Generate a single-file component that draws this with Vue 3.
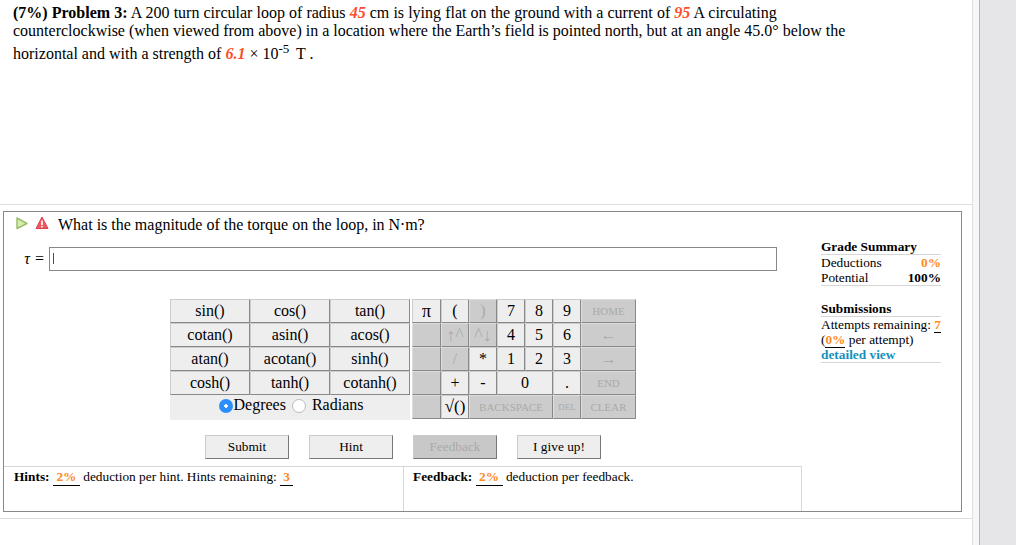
<script setup>
const fns = ['sin()','cos()','tan()','cotan()','asin()','acos()','atan()','acotan()','sinh()','cosh()','tanh()','cotanh()']
const keys = [
  ['π','pi'],['(',''],[')','off'],['7',''],['8',''],['9',''],['HOME','off word'],
  ['','off'],['↑^','off arrow'],['^↓','off arrow'],['4',''],['5',''],['6',''],['←','off'],
  ['','off'],['/','off'],['*',''],['1',''],['2',''],['3',''],['→','off'],
  ['','off'],['+',''],['-',''],['0','zero'],['.',''],['END','off word'],
  ['','off'],['√()','root'],['BACKSPACE','off word back'],['DEL','off word del'],['CLEAR','off word']
]
</script>

<template>
  <div class="page">
    <main class="main">
      <section class="problem">
        <span class="first-line"><b>(7%) Problem 3:</b> A 200 turn circular loop of radius <i class="v">45</i> cm is lying flat on the ground with a current of <i class="v">95</i> A circulating</span><br>counterclockwise (when viewed from above) in a location where the Earth’s field is pointed north, but at an angle 45.0° below the<br>horizontal and with a strength of <i class="v">6.1</i> × 10<sup>-5</sup> T .
      </section>
      <section class="outer">
        <div class="box">
          <div class="question">
            <svg class="play" width="14" height="14" viewBox="0 0 14 14"><path d="M2 2 L12 7.5 L2 12.5 Z" fill="#d3eeb0" stroke="#9cbe6c" stroke-width="1.5" stroke-linejoin="round"/></svg>
            <svg class="warn" width="14" height="14" viewBox="0 0 14 14"><path d="M7 1 L13 12.5 L1 12.5 Z" fill="#ee5a62" stroke="#d9414c" stroke-linejoin="round"/><rect x="6.2" y="4.5" width="1.6" height="4.5" fill="#fff"/><rect x="6.2" y="9.8" width="1.6" height="1.6" fill="#fff"/></svg>
            <span>What is the magnitude of the torque on the loop, in N⋅m?</span>
          </div>
          <div class="answer">
            <span class="tau"><i>τ</i> =</span>
            <div class="input"><span class="caret"></span></div>
          </div>
          <div class="summary">
            <div class="sgroup grade">
              <div class="shead">Grade Summary</div>
              <div class="srow line"><div class="rows"><div class="pair"><span>Deductions</span><b class="o">0%</b></div><div class="pair"><span>Potential</span><b>100%</b></div></div></div>
            </div>
            <div class="sgroup">
              <div class="shead">Submissions</div>
              <div class="srow line">
                <div>Attempts remaining: <b class="o u">7</b></div>
                <div>(<b class="o u">0%</b> per attempt)</div>
                <div class="detail">detailed view</div>
              </div>
            </div>
          </div>
          <div class="calc">
            <div class="funcs">
              <div class="fgrid"><button v-for="f in fns" :key="f" class="key">{{ f }}</button></div>
              <div class="units">
                <span class="radio on"></span><span>Degrees</span><span class="radio"></span><span class="rad">Radians</span>
              </div>
            </div>
            <div class="pad">
              <button v-for="(k,i) in keys" :key="i" class="key" :class="k[1]">{{ k[0] }}</button>
            </div>
          </div>
          <div class="actions">
            <button class="act">Submit</button>
            <button class="act">Hint</button>
            <button class="act dis">Feedback</button>
            <button class="act">I give up!</button>
          </div>
          <div class="notes">
            <div class="note first"><b>Hints:</b> <b class="o u wide">2%</b> deduction per hint. Hints remaining: <b class="o u pad3">3</b></div>
            <div class="note second"><b>Feedback:</b> <b class="o u wide">2%</b> deduction per feedback.</div>
          </div>
        </div>
      </section>
    </main>
    <div class="gutter"></div>
    <aside class="rail"></aside>
  </div>
</template>

<style>
html, body { margin: 0; background: #fff; }
</style>

<style scoped>
.page { display: flex; width: 1016px; height: 545px; overflow: hidden; font-family: "Liberation Serif", serif; color: #000; }
.main { flex: none; border-right: 1px solid #e0e0e0; box-sizing: border-box; width: 973px; }
.gutter { width: 6px; flex: none; background: #f6f6f6; }
.rail { flex: 1; background: #e6e6e8; border-left: 1px solid #b4b4b4; }
.problem { height: 204px; box-sizing: border-box; padding: 4px 0 0 13px; font-size: 16px; line-height: 18px; white-space: nowrap; }
.first-line { word-spacing: 0.1px; }
.problem sup { font-size: 13px; line-height: 18px; padding-right: 3px; }
.v { color: #fb4f2b; font-weight: bold; }
.outer { border-top: 1px solid #ddd; border-bottom: 1px solid #ddd; padding: 6px 10px 5px 3px; height: 315px; box-sizing: border-box; }
.box { position: relative; border: 1px solid #888; height: 301px; box-sizing: border-box; }
.question { display: flex; align-items: center; height: 24px; padding: 0 0 0 11px; font-size: 16px; }
.play { margin: 0 6px 3px 0; }
.warn { margin: 0 9px 3px 0; }
.answer { display: flex; align-items: center; margin: 11px 0 0 0; height: 24px; }
.tau { width: 45px; text-align: right; padding-right: 5px; box-sizing: border-box; font-size: 16px; word-spacing: 1px; }
.input { width: 728px; height: 24px; box-sizing: border-box; border: 1px solid #888; position: relative; }
.caret { position: absolute; left: 3px; top: 5px; width: 1px; height: 11px; background: #f00; }
.summary { position: absolute; left: 817px; top: 27px; width: 120px; font-size: 13.33px; line-height: 15px; }
.sgroup.grade { margin-bottom: 15px; }
.shead { font-weight: bold; border-bottom: 1px solid #d6d6d6; height: 15px; }
.pair { display: flex; justify-content: space-between; }
.line { border-bottom: 1px solid #d6d6d6; }
.o { color: #ff8a1e; font-weight: bold; }
.u { border-bottom: 1px solid #000; }
.detail { color: #1491bd; font-weight: bold; }
.calc { display: flex; gap: 2px; margin: 28px 0 0 166px; }
.funcs { width: 240px; background: #eee; }
.fgrid { display: grid; grid-template-columns: repeat(3, 80px); grid-auto-rows: 24px; }
.key { margin: 0; padding: 0; font: 16px "Liberation Serif", serif; color: #000; background: #eee; border: 1px solid; border-color: #ccc #888 #888 #ccc; box-sizing: border-box; }
.units { height: 25px; display: flex; align-items: center; justify-content: center; font-size: 16px; padding: 0 0 6px 2px; box-sizing: border-box; }
.radio { width: 14px; height: 14px; border-radius: 50%; border: 1px solid #bbb; background: #fff; box-sizing: border-box; margin: 2px 6px 0 6px; }
.radio.on { background: radial-gradient(circle, #fff 0 1.5px, #2b8eff 2px); border: 0; margin: 2px 1px 0 0; }
.pad { display: grid; grid-template-columns: 29px repeat(5, 28px) 55px; grid-auto-rows: 24px; }
.key.off { background: #ccc; color: #aaa; border-color: #ddd #888 #888 #ddd; }
.key.word { font-size: 11px; font-weight: 400; }
.key.arrow { font-size: 18px; }
.key.zero { grid-column: span 2; }
.key.back { grid-column: span 3; }
.key.del { font-size: 9px; }
.key.root { font-size: 17px; }
.key.pi { font-size: 18px; }
.actions { display: grid; grid-template-columns: 84px 84px 84px 84px; column-gap: 20px; margin: 15px 0 0 201px; width: 400px; justify-content: start; }
.act { height: 24px; padding: 0; box-sizing: border-box; font: 13.33px "Liberation Serif", serif; background: #eee; border: 1px solid; border-color: #ccc #777 #777 #ccc; color: #000; }
.act.dis { background: #c8c8c8; color: #aaa; }
.notes { display: flex; margin-top: 7px; font-size: 13.33px; line-height: 20px; }
.note { height: 45px; box-sizing: border-box; border-top: 1px solid #d6d6d6; padding-left: 10px; }
.note.first { width: 399px; }
.note.second { width: 399px; border-left: 1px solid #d6d6d6; border-right: 1px solid #d6d6d6; padding-left: 9px; }
.u.wide { display: inline-block; width: 27px; text-align: center; line-height: 16px; }
.u.pad3 { display: inline-block; width: 13px; text-align: center; line-height: 16px; }
</style>
